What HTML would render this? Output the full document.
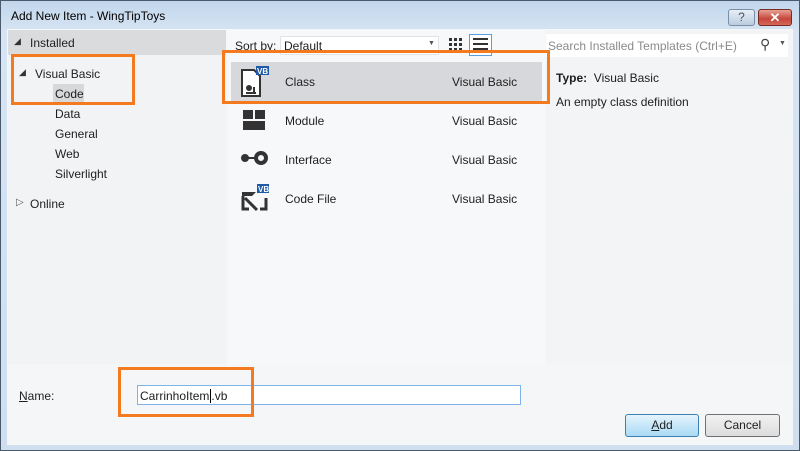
<!DOCTYPE html>
<html><head><style>
body{margin:0;width:800px;height:451px;overflow:hidden;font-family:"Liberation Sans",sans-serif;font-size:12px;color:#1e1e1e;background:#bcd1e8;position:relative}
.a{position:absolute}
.t{white-space:nowrap}
</style></head><body>
<div class="a" style="left:0;top:0;width:800px;height:451px;background:linear-gradient(#c2d6ec,#d6e4f3 30px,#cfdff0);border:1px solid #4a5a6c;box-sizing:border-box"></div>
<div class="a t" style="left:11px;top:9px;font-size:12px;color:#000">Add New Item - WingTipToys</div>
<div class="a" style="left:728px;top:9px;width:27px;height:17px;border:1px solid #7a8ea6;border-radius:3px;background:linear-gradient(#e6eef7,#bccde0);box-sizing:border-box;text-align:center;font-size:12px;color:#555;line-height:15px">?</div>
<div class="a" style="left:758px;top:9px;width:34px;height:17px;border:1px solid #7a2a22;border-radius:3px;background:linear-gradient(#e8a094,#c6463a 60%,#d46a5a);box-sizing:border-box;text-align:center;font-size:13px;font-weight:bold;color:#fff;line-height:15px">✕</div>
<div class="a" style="left:7px;top:29px;width:786px;height:416px;background:#f5f6f7"></div>
<!-- left panel -->
<div class="a" style="left:8px;top:30px;width:218px;height:334px;background:#f2f3f4"></div>
<div class="a" style="left:8px;top:30px;width:218px;height:25px;background:#dadbdd"></div>
<div class="a t" style="left:14px;top:36px;font-size:9px;color:#333">◢</div>
<div class="a t" style="left:30px;top:36px">Installed</div>
<div class="a t" style="left:19px;top:67px;font-size:9px;color:#333">◢</div>
<div class="a t" style="left:35px;top:67px">Visual Basic</div>
<div class="a" style="left:53px;top:84px;width:31px;height:19px;background:#d7d8da"></div>
<div class="a t" style="left:55px;top:87px">Code</div>
<div class="a t" style="left:55px;top:107px">Data</div>
<div class="a t" style="left:55px;top:127px">General</div>
<div class="a t" style="left:55px;top:147px">Web</div>
<div class="a t" style="left:55px;top:167px">Silverlight</div>
<div class="a t" style="left:16px;top:197px;font-size:10px;color:#555">▷</div>
<div class="a t" style="left:30px;top:197px">Online</div>
<div class="a" style="left:11px;top:54px;width:124px;height:51px;border:3px solid #f47a20;box-sizing:border-box"></div>
<!-- middle -->
<div class="a" style="left:228px;top:30px;width:317px;height:334px;background:#f7f8f9"></div>
<!-- right -->
<div class="a" style="left:546px;top:30px;width:246px;height:334px;background:#f3f4f5"></div>
<div class="a" style="left:546px;top:34px;width:242px;height:23px;background:#fff"></div>
<div class="a t" style="left:548px;top:39px;color:#8a8a8a">Search Installed Templates (Ctrl+E)</div>
<div class="a t" style="left:760px;top:36px;font-size:14px;color:#444">⚲</div>
<div class="a t" style="left:779px;top:40px;font-size:7px;color:#555">▼</div>
<div class="a t" style="left:556px;top:71px"><b>Type:</b>&nbsp; Visual Basic</div>
<div class="a t" style="left:556px;top:95px">An empty class definition</div>

<div class="a t" style="left:235px;top:39px">Sort by:</div>
<div class="a" style="left:280px;top:36px;width:159px;height:19px;background:#fff;border:1px solid #e2e3e4;box-sizing:border-box"></div>
<div class="a t" style="left:284px;top:39px">Default</div>
<div class="a t" style="left:428px;top:40px;font-size:7px;color:#555">▼</div>
<div class="a" style="left:449px;top:38px;width:14px;height:14px;background:repeating-linear-gradient(90deg,#333 0 3px,transparent 3px 5px);-webkit-mask:repeating-linear-gradient(#000 0 3px,transparent 3px 5px)"></div>
<div class="a" style="left:469px;top:34px;width:23px;height:22px;border:1px solid #5b9be0;box-sizing:border-box;background:#fff"></div>
<div class="a" style="left:473px;top:38px;width:15px;height:14px;background:repeating-linear-gradient(#333 0 2px,transparent 2px 5px)"></div>
<div class="a" style="left:231px;top:62px;width:311px;height:39px;background:#d7d8db"></div>
<svg class="a" style="left:238px;top:64px" width="32" height="34" viewBox="0 0 32 34"><path d="M4 6h12l6 6v20H4z" fill="#fff" stroke="#333" stroke-width="2"/><rect x="18" y="2" width="13" height="9" fill="#1e5aa8"/><text x="19" y="10" font-size="8" font-weight="bold" fill="#fff" font-family="Liberation Sans">VB</text><circle cx="11" cy="24" r="3" fill="#333"/><path d="M8 29h10M16 23v6" stroke="#333" stroke-width="2"/></svg>
<div class="a t" style="left:285px;top:75px">Class</div>
<div class="a t" style="left:452px;top:75px">Visual Basic</div>
<svg class="a" style="left:243px;top:110px" width="22" height="20"><rect x="0" y="0" width="10" height="9" fill="#333"/><rect x="12" y="0" width="10" height="9" fill="#333"/><rect x="0" y="11" width="22" height="9" fill="#333"/></svg>
<div class="a t" style="left:285px;top:114px">Module</div>
<div class="a t" style="left:452px;top:114px">Visual Basic</div>
<svg class="a" style="left:240px;top:150px" width="30" height="16"><circle cx="5" cy="8" r="4" fill="#333"/><path d="M8 8h8" stroke="#333" stroke-width="2"/><circle cx="21" cy="8" r="5" fill="none" stroke="#333" stroke-width="4"/></svg>
<div class="a t" style="left:285px;top:153px">Interface</div>
<div class="a t" style="left:452px;top:153px">Visual Basic</div>
<svg class="a" style="left:240px;top:184px" width="30" height="28"><rect x="17" y="0" width="12" height="9" fill="#1e5aa8"/><text x="18" y="8" font-size="8" font-weight="bold" fill="#fff" font-family="Liberation Sans">VB</text><path d="M2 8h14l-4 4H2z" fill="#333"/><path d="M3 12v13h6M26 14v11h-6M5 14l12 12" stroke="#333" stroke-width="3" fill="none"/></svg>
<div class="a t" style="left:285px;top:192px">Code File</div>
<div class="a t" style="left:452px;top:192px">Visual Basic</div>
<div class="a" style="left:222px;top:50px;width:328px;height:54px;border:3px solid #f47a20;box-sizing:border-box"></div>
<!-- bottom -->
<div class="a t" style="left:19px;top:389px"><u>N</u>ame:</div>
<div class="a" style="left:137px;top:385px;width:384px;height:20px;background:#fff;border:1px solid #7eb4ea;box-sizing:border-box"></div>
<div class="a t" style="left:140px;top:389px">CarrinhoItem<span style="border-left:1px solid #000;margin-left:1px"></span>.vb</div>
<div class="a" style="left:118px;top:367px;width:136px;height:50px;border:3px solid #f47a20;box-sizing:border-box"></div>
<div class="a" style="left:625px;top:414px;width:74px;height:23px;border:1px solid #3c7fb1;border-radius:3px;background:linear-gradient(#e5f4fc,#a9daf5);box-sizing:border-box;text-align:center;line-height:21px"><u>A</u>dd</div>
<div class="a" style="left:705px;top:414px;width:75px;height:23px;border:1px solid #707070;border-radius:3px;background:linear-gradient(#f2f2f2,#dcdcdc);box-sizing:border-box;text-align:center;line-height:21px">Cancel</div>
</body></html>
